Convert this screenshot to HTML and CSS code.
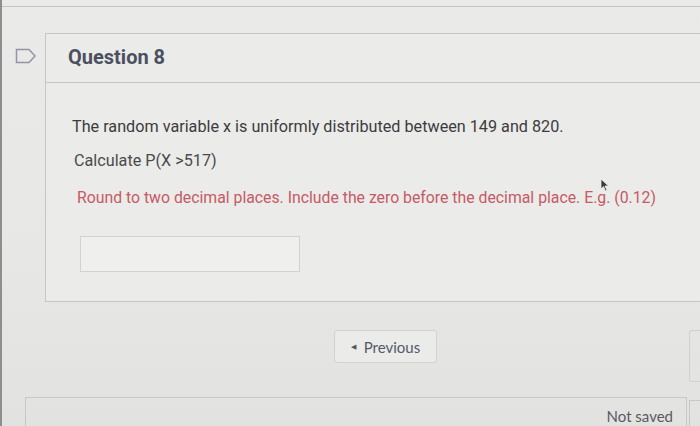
FILE: index.html
```html
<!DOCTYPE html>
<html>
<head>
<meta charset="utf-8">
<link rel="stylesheet" href="styles.css">
</head>
<body>
<div class="page">
  <div class="prev-edge"></div>
  <div class="question-row">
    <div class="flag-col">
      <svg class="flag" width="22" height="16" viewBox="0 0 22 16">
        <path d="M1.5 1.5 H14 L20 8 L14 14.5 H1.5 Z" fill="none" stroke="#9494a8" stroke-width="1.5" stroke-linejoin="miter"/>
      </svg>
    </div>
    <div class="card">
      <div class="card-head">Question 8</div>
      <div class="card-body">
        <p class="q-text">The random variable x is uniformly distributed between 149 and 820.</p>
        <p class="q-text calc">Calculate P(X &gt;517)</p>
        <p class="q-note">Round to two decimal places. Include the zero before the decimal place. E.g. (0.12)</p>
        <div class="answer"></div>
        <svg class="cursor" width="10" height="14" viewBox="0 0 10 14">
          <path d="M1 1 L1 11 L3.5 8.5 L5.5 13 L7 12.3 L5 8 L8.5 8 Z" fill="#3a3a3a" stroke="#eee" stroke-width="0.8"/>
        </svg>
      </div>
    </div>
  </div>
  <div class="nav-row">
    <button class="btn-prev"><span class="tri">&#9664;</span>Previous</button>
    <div class="next-edge"></div>
  </div>
  <div class="footer-row">
    <div class="footer-box">
      <span class="status">Not saved</span>
    </div>
    <div class="footer-side"></div>
  </div>
</div>
</body>
</html>
```
FILE: styles.css
```css
html, body {
  margin: 0;
  padding: 0;
  height: 100%;
  overflow: hidden;
}
body {
  background: linear-gradient(180deg, #eaeae8 0%, #e7e7e5 60%, #e2e2e0 100%);
  font-family: Roboto, "Liberation Sans", sans-serif;
  border-left: 2px solid #8e8e8e;
  box-sizing: border-box;
}
.page {
  display: flex;
  flex-direction: column;
  height: 426px;
}
.prev-edge {
  height: 6px;
  border-bottom: 1px solid #c4c4c2;
  margin-right: -10px;
}
.question-row {
  display: flex;
  margin-top: 26px;
}
.flag-col {
  width: 43px;
  flex: none;
  padding-top: 15px;
  padding-left: 13px;
  box-sizing: border-box;
}
.flag { display: block; }
.card {
  flex: 1;
  margin-right: -20px;
  border: 1px solid #c6c6c4;
  border-right: none;
  background: #ebebe9;
}
.card-head {
  height: 48px;
  border-bottom: 1px solid #c6c6c4;
  padding-left: 22px;
  font-family: Roboto, "Liberation Sans", sans-serif;
  font-weight: 700;
  font-size: 20px;
  line-height: 46px;
  color: #4b5060;
}
.card-body {
  position: relative;
  padding: 34px 0 29px 26px;
}
.q-text {
  margin: 0;
  font-size: 16.2px;
  line-height: 20px;
  color: #3c3c3e;
}
.calc {
  margin-top: 14px;
  padding-left: 2px;
  color: #4a4a4c;
}
.q-note {
  margin: 17px 0 0 5px;
  font-size: 15.8px;
  line-height: 20px;
  color: #c65a66;
}
.answer {
  margin: 28px 0 0 8px;
  width: 220px;
  height: 36px;
  border: 1px solid #d2d2d0;
  background: #efefed;
  box-sizing: border-box;
}
.cursor {
  position: absolute;
  left: 554px;
  top: 95px;
}
.nav-row {
  display: flex;
  margin-top: 28px;
  height: 50px;
}
.btn-prev {
  margin-left: 332px;
  width: 103px;
  height: 33px;
  border: 1px solid #d2d2d0;
  border-radius: 3px;
  background: #ebebe9;
  font-family: Lato, Roboto, sans-serif;
  font-size: 15px;
  color: #535a6a;
  display: flex;
  align-items: center;
  justify-content: center;
  gap: 8px;
  padding: 0;
}
.tri {
  font-size: 7px;
  color: #555;
}
.next-edge {
  margin-left: auto;
  width: 10px;
  height: 50px;
  border: 1px solid #d0d0ce;
  border-right: none;
  border-radius: 3px 0 0 3px;
}
.footer-row {
  display: flex;
  margin-top: 17px;
  flex: 1;
}
.footer-box {
  flex: 1;
  margin-left: 23px;
  border: 1px solid #c8c8c6;
  border-bottom: none;
  display: flex;
  justify-content: flex-end;
  align-items: flex-end;
  padding-right: 13px;
}
.status {
  font-family: Lato, Roboto, sans-serif;
  font-size: 15px;
  color: #5a5a5e;
  padding-bottom: 1px;
}
.footer-side {
  width: 10px;
  margin-left: 2px;
  border: 1px solid #c8c8c6;
  border-right: none;
  border-bottom: none;
  margin-top: 3px;
}
```
